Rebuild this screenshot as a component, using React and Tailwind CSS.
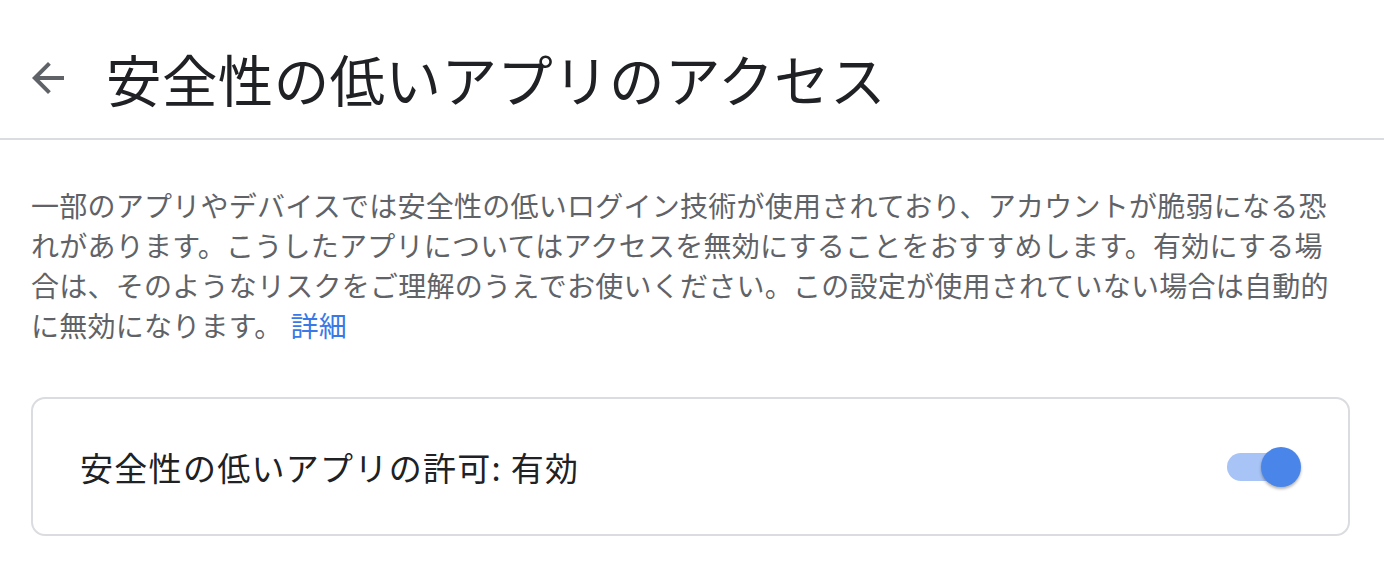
import React from "react";

export default function App() {
  const font = { fontFamily: '"Noto Sans CJK JP", "Noto Sans", sans-serif' };
  return (
    <div className="w-[1384px] h-[580px] bg-white overflow-hidden" style={font}>
      <header className="flex items-center pl-[24px] pt-[50px] pb-[32px] border-b-2 border-[#dadce0]">
        <svg viewBox="0 0 24 24" className="w-[48px] h-[48px] shrink-0" fill="#5f6368">
          <path d="M20 11H7.83l5.59-5.59L12 4l-8 8 8 8 1.41-1.41L7.83 13H20v-2z" />
        </svg>
        <h1 className="ml-[34px] text-[55.5px] leading-[56px] text-[#202124] font-normal tracking-[0.4px]">
          安全性の低いアプリのアクセス
        </h1>
      </header>
      <main className="pl-[31px] pt-[45px]">
        <p className="w-[1308px] text-[28px] leading-[40px] tracking-[0.25px] text-[#5f6368]">
          一部のアプリやデバイスでは安全性の低いログイン技術が使用されており、アカウントが脆弱になる恐れがあります。こうしたアプリについてはアクセスを無効にすることをおすすめします。有効にする場合は、そのようなリスクをご理解のうえでお使いください。この設定が使用されていない場合は自動的に無効になります。
          <a href="#" className="ml-[8px] text-[#3b78e7]">詳細</a>
        </p>
        <div className="mt-[52px] w-[1319px] h-[139px] border-2 border-[#dadce0] rounded-[14px] flex items-center justify-between pl-[47px] pr-[47px]">
          <span className="text-[33px] leading-[40px] tracking-[1.3px] text-[#202124]">
            安全性の低いアプリの許可: 有効
          </span>
          <div className="relative w-[74px] h-[40px] flex items-center">
            <div className="w-[68px] h-[28px] rounded-full bg-[#a8c3f5]"></div>
            <div className="absolute right-0 top-0 w-[40px] h-[40px] rounded-full bg-[#4a86ea] shadow-[0_2px_3px_rgba(0,0,0,0.3)]"></div>
          </div>
        </div>
      </main>
    </div>
  );
}
